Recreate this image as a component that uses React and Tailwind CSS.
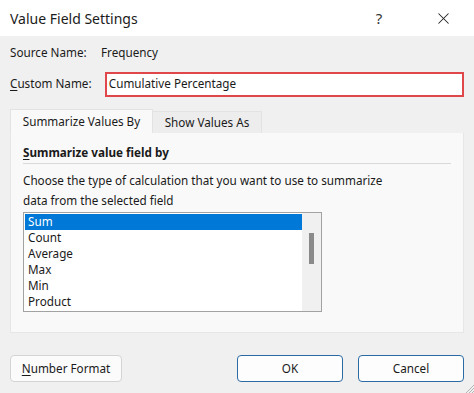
import React from "react";
import { X } from "lucide-react";

const items = ["Sum", "Count", "Average", "Max", "Min", "Product"];

const font = { fontFamily: '"Noto Sans", "Open Sans", sans-serif' };

const App = () => {
  return (
    <div
      className="w-[474px] h-[393px] bg-[#f0f0f0] overflow-hidden text-[#1a1a1a] text-[11.7px] relative"
      style={font}
    >
      {/* title bar */}
      <div className="h-[36px] bg-white flex items-center pl-[10px]">
        <span className="text-[14px] text-[#1b1b1b]">Value Field Settings</span>
        <span className="ml-auto w-[20px] text-center text-[15px] mr-[45px] text-[#333]">?</span>
        <X size={19} strokeWidth={1.3} className="mr-[21px] text-[#222]" />
      </div>

      <div className="px-[10px]">
        {/* source name */}
        <div className="h-[22px] mt-[6px] flex items-center">
          <span className="w-[91px]">Source Name:</span>
          <span>Frequency</span>
        </div>

        {/* custom name */}
        <div className="h-[26px] mt-[7px] flex items-center">
          <span className="w-[95px]">
            <span className="underline underline-offset-2">C</span>ustom Name:
          </span>
          <div className="w-[360px] h-[25px] border-2 border-[#e0474a] bg-white flex items-center pl-[2px]">
            Cumulative Percentage
          </div>
        </div>

        {/* tabs */}
        <div className="flex items-end mt-[12px] h-[24px]">
          <div className="w-[143px] h-[24px] bg-[#f9f9f9] border border-b-0 border-[#e3e3e3] flex items-center justify-center">
            Summarize Values By
          </div>
          <div className="w-[109px] h-[22px] bg-[#ededed] border border-b-0 border-l-0 border-[#e3e3e3] flex items-center justify-center">
            Show Values As
          </div>
        </div>

        {/* panel */}
        <div className="w-[454px] h-[200px] bg-[#f9f9f9] border border-t-0 border-[#e6e6e6] px-[12px] pt-[11px]">
          <div className="font-bold h-[20px] flex items-center border-b border-[#d9d9d9] pb-[2px]">
            <span className="underline underline-offset-2">S</span>ummarize value field by
          </div>
          <div className="mt-[6px] leading-[20px]">
            Choose the type of calculation that you want to use to summarize
            <br />
            data from the selected field
          </div>
          <div className="mt-[2px] w-[299px] h-[100px] border border-[#a2a2a2] bg-white flex">
            <div className="flex-1 pt-[1px] pl-[1px]">
              {items.map((it, i) => (
                <div
                  key={it}
                  className={
                    i === 0
                      ? "h-[16px] bg-[#0078d7] text-white flex items-center pl-[3px]"
                      : "h-[16px] flex items-center pl-[3px]"
                  }
                >
                  {it}
                </div>
              ))}
            </div>
            <div className="w-[19px] bg-[#f0f0f0] pt-[20px] flex justify-center">
              <div className="w-[5px] h-[31px] bg-[#8a8a8a]" />
            </div>
          </div>
        </div>

        {/* buttons */}
        <div className="flex mt-[22px] h-[27px]">
          <button className="w-[112px] h-[27px] rounded-[4px] border border-[#d4d4d4] bg-[#fbfbfb]">
            <span className="underline underline-offset-2">N</span>umber Format
          </button>
          <button className="ml-auto w-[106px] h-[27px] rounded-[4px] border border-[#2b6aa3] bg-[#fdfdfd]">
            OK
          </button>
          <button className="ml-[15px] w-[106px] h-[27px] rounded-[4px] border border-[#2b6aa3] bg-[#fdfdfd]">
            Cancel
          </button>
        </div>
      </div>

      {/* resize grip */}
      <svg className="absolute right-0 bottom-0" width="10" height="10" viewBox="0 0 10 10">
        <path d="M10 2 L2 10 M10 5 L5 10 M10 8 L8 10" stroke="#b5b5b5" strokeWidth="1" />
      </svg>
    </div>
  );
};

export default App;
